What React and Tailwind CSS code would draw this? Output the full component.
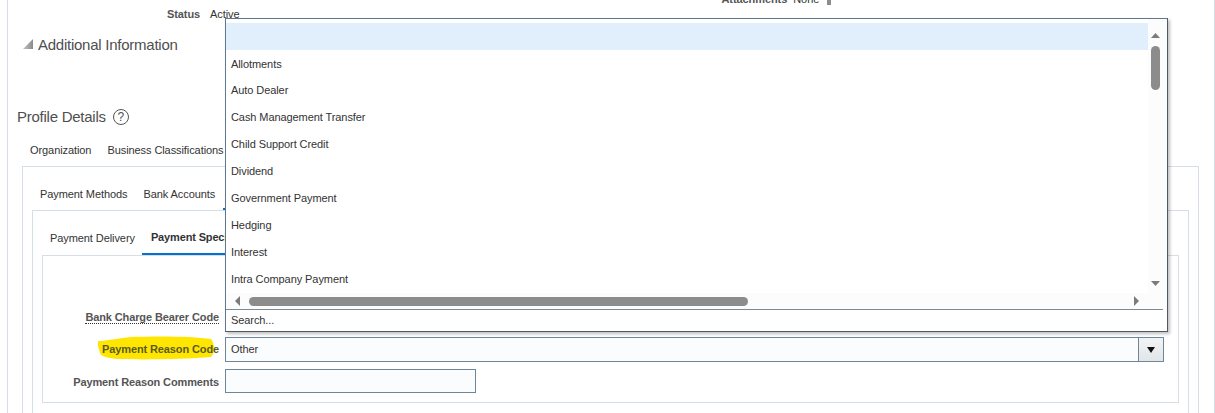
import React from "react";

const items = ["Allotments","Auto Dealer","Cash Management Transfer","Child Support Credit","Dividend","Government Payment","Hedging","Interest","Intra Company Payment"];

function Tri({ points, w, h, color = "#7b7b7b", className = "" }) {
  return (
    <svg width={w} height={h} viewBox={`0 0 ${w} ${h}`} className={className}>
      <polygon points={points} fill={color} />
    </svg>
  );
}

function Dropdown() {
  return (
    <div className="absolute left-[225px] top-[18px] w-[943px] h-[314px] flex flex-col bg-white border border-[#60788f] border-b-[#4d5a66] border-r-[#4d5a66] shadow-[2px_2px_3px_rgba(0,0,0,0.25)]">
      <div className="flex h-[274px]">
        <div className="w-[922px] pt-[4px] bg-white">
          <div className="h-[27px] bg-[#e1effd]" />
          {items.map((t, i) => (
            <div key={t} className={`h-[27px] pl-[5px] flex items-center text-[11px] text-[#333] ${i === 0 ? "pt-[1px]" : ""}`}>{t}</div>
          ))}
        </div>
        <div className="flex-1 bg-[#fcfcfc] flex flex-col items-center pl-[2px] pr-[7px] pt-[14px] pb-[7px]">
          <Tri points="4.5,0 9,5 0,5" w={9} h={5} />
          <div className="mt-[8px] w-[9px] h-[44px] rounded-full bg-[#8c8c8c]" />
          <Tri points="0,0 9,0 4.5,5" w={9} h={5} className="mt-auto" />
        </div>
      </div>
      <div className="h-[16px] bg-[#fcfcfc] flex items-center pl-[9px] pr-[28px]">
        <Tri points="5,0 5,10 0,5" w={5} h={10} />
        <div className="ml-[9px] w-[499px] h-[9px] rounded-full bg-[#8c8c8c]" />
        <Tri points="0,0 5,5 0,10" w={5} h={10} className="ml-auto" />
      </div>
      <div className="mr-[4px] border-t border-[#7a8a99] flex-1 pl-[5px] flex items-center text-[11px] text-[#333]">Search...</div>
    </div>
  );
}

function Row({ label, children, className = "" }) {
  return (
    <div className={`flex items-center ${className}`}>
      <div className="w-[176px] text-right text-[11px] font-bold text-[#555] shrink-0 tracking-[-0.12px]">{label}</div>
      <div className="ml-[6px] flex-1 flex">{children}</div>
    </div>
  );
}

export default function App() {
  return (
    <div className="relative w-[1215px] h-[413px] overflow-hidden bg-white text-[#333] font-['Liberation_Sans',Arial,sans-serif] text-[11px] tracking-[-0.08px]">
      <div className="ml-[7px] w-[1208px] border-x border-[#d6dfe6] h-[600px]">
        <div className="h-[24px] relative flex">
          <div className="w-[192px] pt-[6px] text-right font-bold text-[#555] tracking-[-0.12px]">Status</div>
          <div className="ml-[10px] pt-[6px]">Active</div>
          <div className="ml-[482px] mt-[-7px] font-bold text-[#555] leading-[13px] h-[13px]">Attachments</div>
          <div className="ml-[6px] mt-[-7px] leading-[13px] h-[13px]">None</div>
          <div className="ml-[8px] w-[4px] h-[5px] bg-[#8c8c8c]" />
        </div>
        <div className="mt-[12px] h-[18px] flex items-center text-[15px] leading-[18px] text-[#4f4f4f] tracking-[-0.25px]">
          <svg width="10" height="10" viewBox="0 0 10 10" className="ml-[15px] mt-[-2px]">
            <defs>
              <linearGradient id="g" x1="0" y1="0" x2="1" y2="0">
                <stop offset="0" stopColor="#c4c4c4" />
                <stop offset="1" stopColor="#8a8a8a" />
              </linearGradient>
            </defs>
            <polygon points="10,0 10,10 0,10" fill="url(#g)" />
          </svg>
          <span className="ml-[5px]">Additional Information</span>
        </div>
        <div className="mt-[54px] h-[18px] flex items-center text-[15px] leading-[18px] text-[#4f4f4f] tracking-[-0.25px]">
          <span className="ml-[9px]">Profile Details</span>
          <span className="ml-[7px] w-[16px] h-[16px] rounded-full border border-[#555] flex items-center justify-center text-[12px] leading-none">?</span>
        </div>
        <div className="mt-[8px] h-[32px] flex items-center pl-[22px] gap-[16px]">
          <span>Organization</span>
          <span>Business Classifications</span>
        </div>
        <div className="ml-[14px] mr-[15px] border border-[#d6dfe6] h-[400px]">
          <div className="mt-[11px] h-[32px] flex items-center pl-[17px] gap-[16px]">
            <span>Payment Methods</span>
            <span>Bank Accounts</span>
            <span className="ml-[-8px] w-[3px] h-[2px] self-end bg-[#0572ce]" />
          </div>
          <div className="ml-[9px] mr-[9px] border border-[#d6dfe6] h-[400px]">
            <div className="h-[44px] flex items-end pl-[9px]">
              <span className="h-[31px] pl-[8px] pr-[7px] pb-[3px] flex items-center">Payment Delivery</span>
              <span className="w-[160px] h-[33px] px-[9px] pb-[1px] flex items-center font-bold text-[#333] tracking-[-0.15px] border-b-2 border-[#0572ce]">Payment Specifics</span>
            </div>
            <div className="ml-[9px] mr-[9px] border border-[#d6dfe6] pt-[49px] pb-[10px] h-[148px]">
              <Row label={<span className="border-b border-dotted border-[#333]">Bank Charge Bearer Code</span>} className="h-[24px]">
                <div className="h-[24px]" />
              </Row>
              <Row className="mt-[8px] h-[25px] relative" label={
                <span className="relative inline-block">
                  <svg width="118" height="24" viewBox="0 0 118 24" className="absolute right-[4px] top-[-5px]">
                    <path d="M1 5 C 8 5, 16 3, 34 1 C 60 0, 96 0, 114 3 C 118 8, 118 17, 114 21 C 90 23, 50 24, 20 23 C 10 22, 3 20, 3 17 C 2 13, 0 9, 1 5 Z" fill="#ffe600" />
                  </svg>
                  <span className="relative text-[#5a5a20]">Payment Reason Code</span>
                </span>
              }>
                <div className="flex w-[939px] h-[25px] border border-[#6f8599] bg-[#fbfcfe]">
                  <div className="flex-1 pl-[5px] flex items-center text-[#333]">Other</div>
                  <div className="w-[25px] border-l border-[#6f8599] bg-gradient-to-b from-[#f2f3f4] to-[#e2e6e9] flex items-center justify-center">
                    <Tri points="0,0 8,0 4,6" w={8} h={6} color="#111" />
                  </div>
                </div>
              </Row>
              <Row className="mt-[7px] h-[24px]" label={<span className="relative top-[1px]">Payment Reason Comments</span>}>
                <div className="w-[251px] h-[24px] border border-[#6f8599] bg-[#fbfcfe]" />
              </Row>
            </div>
          </div>
        </div>
      </div>
      <Dropdown />
    </div>
  );
}
